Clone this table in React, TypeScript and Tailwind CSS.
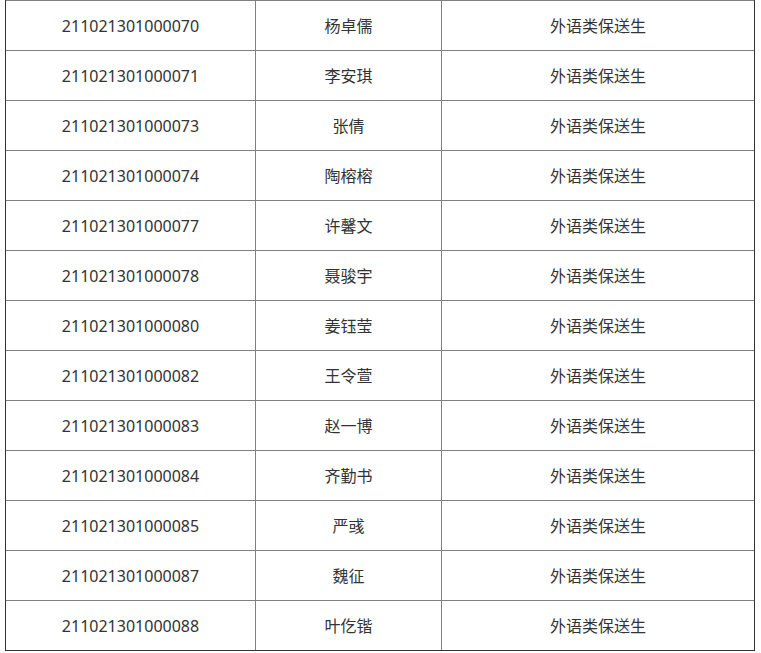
import React from 'react';

const rows: [string, string][] = [
  ['211021301000070', '杨卓儒'],
  ['211021301000071', '李安琪'],
  ['211021301000073', '张倩'],
  ['211021301000074', '陶榕榕'],
  ['211021301000077', '许馨文'],
  ['211021301000078', '聂骏宇'],
  ['211021301000080', '姜钰莹'],
  ['211021301000082', '王令萱'],
  ['211021301000083', '赵一博'],
  ['211021301000084', '齐勤书'],
  ['211021301000085', '严彧'],
  ['211021301000087', '魏征'],
  ['211021301000088', '叶仡锴'],
];

const App: React.FC = () => {
  return (
    <div className="min-h-screen bg-white">
      <div
        className="ml-[5px] w-[750px] border-x border-b border-[#333] text-[16px] text-[#333]"
        style={{ fontFamily: '"Noto Sans", "Noto Sans CJK SC", sans-serif' }}
      >
        {rows.map(([id, name]) => (
          <div key={id} className="flex h-[50px] border-t border-[#808080]">
            <div className="flex w-[249px] items-center justify-center">{id}</div>
            <div className="flex w-[186px] items-center justify-center border-l border-[#808080]">{name}</div>
            <div className="flex w-[313px] items-center justify-center border-l border-[#808080]">外语类保送生</div>
          </div>
        ))}
      </div>
    </div>
  );
};

export default App;
